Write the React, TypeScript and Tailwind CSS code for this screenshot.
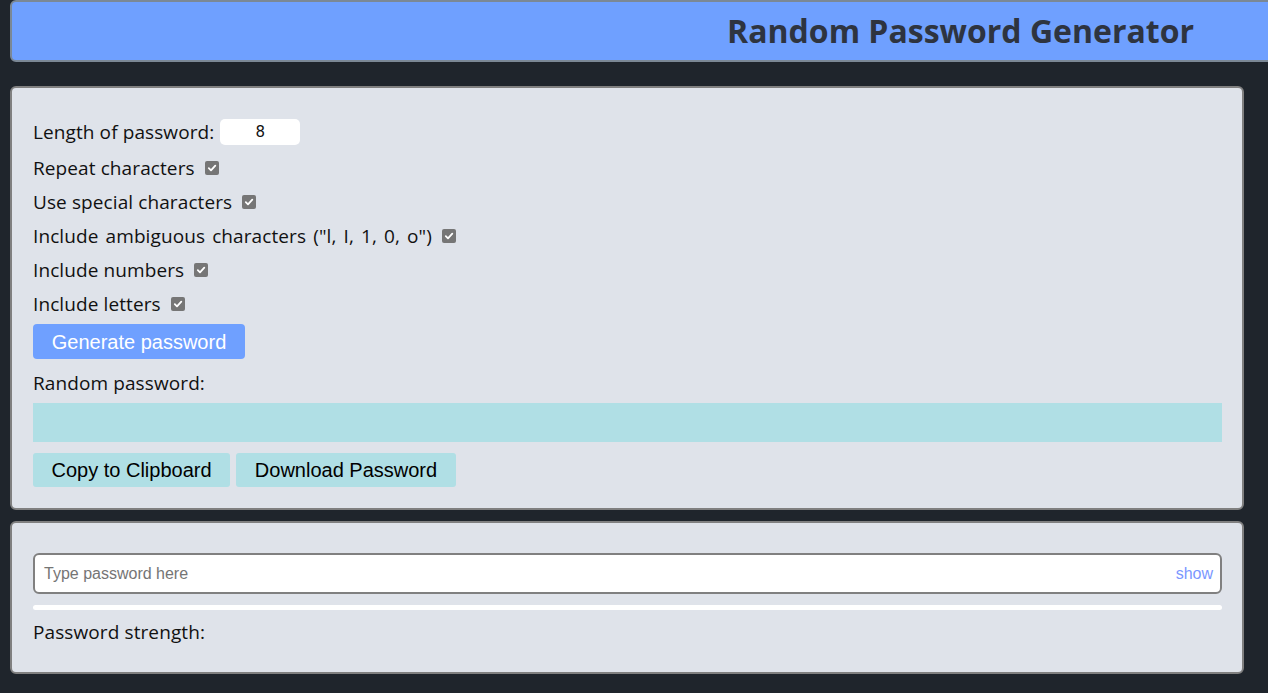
import React from "react";

const Check = () => (
  <span className="ml-[10px] inline-flex h-[14px] w-[14px] items-center justify-center rounded-[2px] bg-[#767676]">
    <svg width="10" height="10" viewBox="0 0 10 10">
      <path d="M1.8 5.2 L4 7.4 L8.3 2.6" fill="none" stroke="white" strokeWidth="1.8" strokeLinecap="round" strokeLinejoin="round" />
    </svg>
  </span>
);

const Row = ({ label, wide }: { label: string; wide?: boolean }) => (
  <div className="flex h-[34px] items-center">
    <span className={wide ? "[word-spacing:2px]" : ""}>{label}</span>
    <Check />
  </div>
);

export default function App() {
  return (
    <div
      className="h-[693px] w-[1268px] overflow-hidden bg-[#1f252c] text-[19px] tracking-[0.1px] text-[#111]"
      style={{ fontFamily: '"Open Sans", "Noto Sans", sans-serif' }}
    >
      <header className="ml-[10px] flex h-[62px] w-[1290px] items-center justify-end rounded-md border-2 border-[#7b8895] bg-[#6fa0ff] pr-[104px] tracking-normal">
        <h1 className="text-[32px] font-bold leading-none text-[#2e3440]">Random Password Generator</h1>
      </header>

      <section className="ml-[10px] mt-[24px] w-[1234px] rounded-md border-2 border-[#808080] bg-[#dfe3ea] pb-[21px] pl-[21px] pr-[20px] pt-[31px]">
        <div className="flex h-[26px] items-center">
          <span>Length of password:</span>
          <div
            className="ml-[6px] flex h-[26px] w-[80px] items-center justify-center rounded-[5px] bg-white text-[15px]"
            style={{ fontFamily: '"DejaVu Sans", sans-serif' }}
          >
            8
          </div>
        </div>
        <div className="mt-[6px]">
          <Row label="Repeat characters" />
          <Row label="Use special characters" />
          <Row label={'Include ambiguous characters ("l, I, 1, 0, o")'} wide />
          <Row label="Include numbers" />
          <Row label="Include letters" />
        </div>
        <button
          className="mt-[3px] flex h-[35px] w-[212px] items-center justify-center rounded-[4px] bg-[#6fa0ff] text-[20px] tracking-normal text-white"
          style={{ fontFamily: '"Liberation Sans", Arial, sans-serif' }}
        >
          Generate password
        </button>
        <div className="mt-[11px] flex h-[26px] items-center">Random password:</div>
        <div className="mt-[7px] h-[39px] w-full bg-[#b0dfe5]" />
        <div className="mt-[11px] flex gap-[6px] tracking-normal" style={{ fontFamily: '"Liberation Sans", Arial, sans-serif' }}>
          <button className="flex h-[34px] w-[197px] items-center justify-center rounded-[3px] bg-[#b0dfe5] text-[20px] text-black">
            Copy to Clipboard
          </button>
          <button className="flex h-[34px] w-[220px] items-center justify-center rounded-[3px] bg-[#b0dfe5] text-[20px] text-black">
            Download Password
          </button>
        </div>
      </section>

      <section className="ml-[10px] mt-[11px] w-[1234px] rounded-md border-2 border-[#808080] bg-[#dfe3ea] pb-[27px] pl-[21px] pr-[20px] pt-[30px]">
        <div
          className="flex h-[41px] items-center justify-between rounded-[6px] border-2 border-[#808080] bg-white pl-[9px] pr-[7px] text-[16px] tracking-normal"
          style={{ fontFamily: '"Liberation Sans", Arial, sans-serif' }}
        >
          <span className="text-[#757575]">Type password here</span>
          <span className="text-[#7b97ff]">show</span>
        </div>
        <div className="mt-[11px] h-[5px] rounded-full bg-white" />
        <div className="mt-[9px] flex h-[26px] items-center">Password strength:</div>
      </section>
    </div>
  );
}
